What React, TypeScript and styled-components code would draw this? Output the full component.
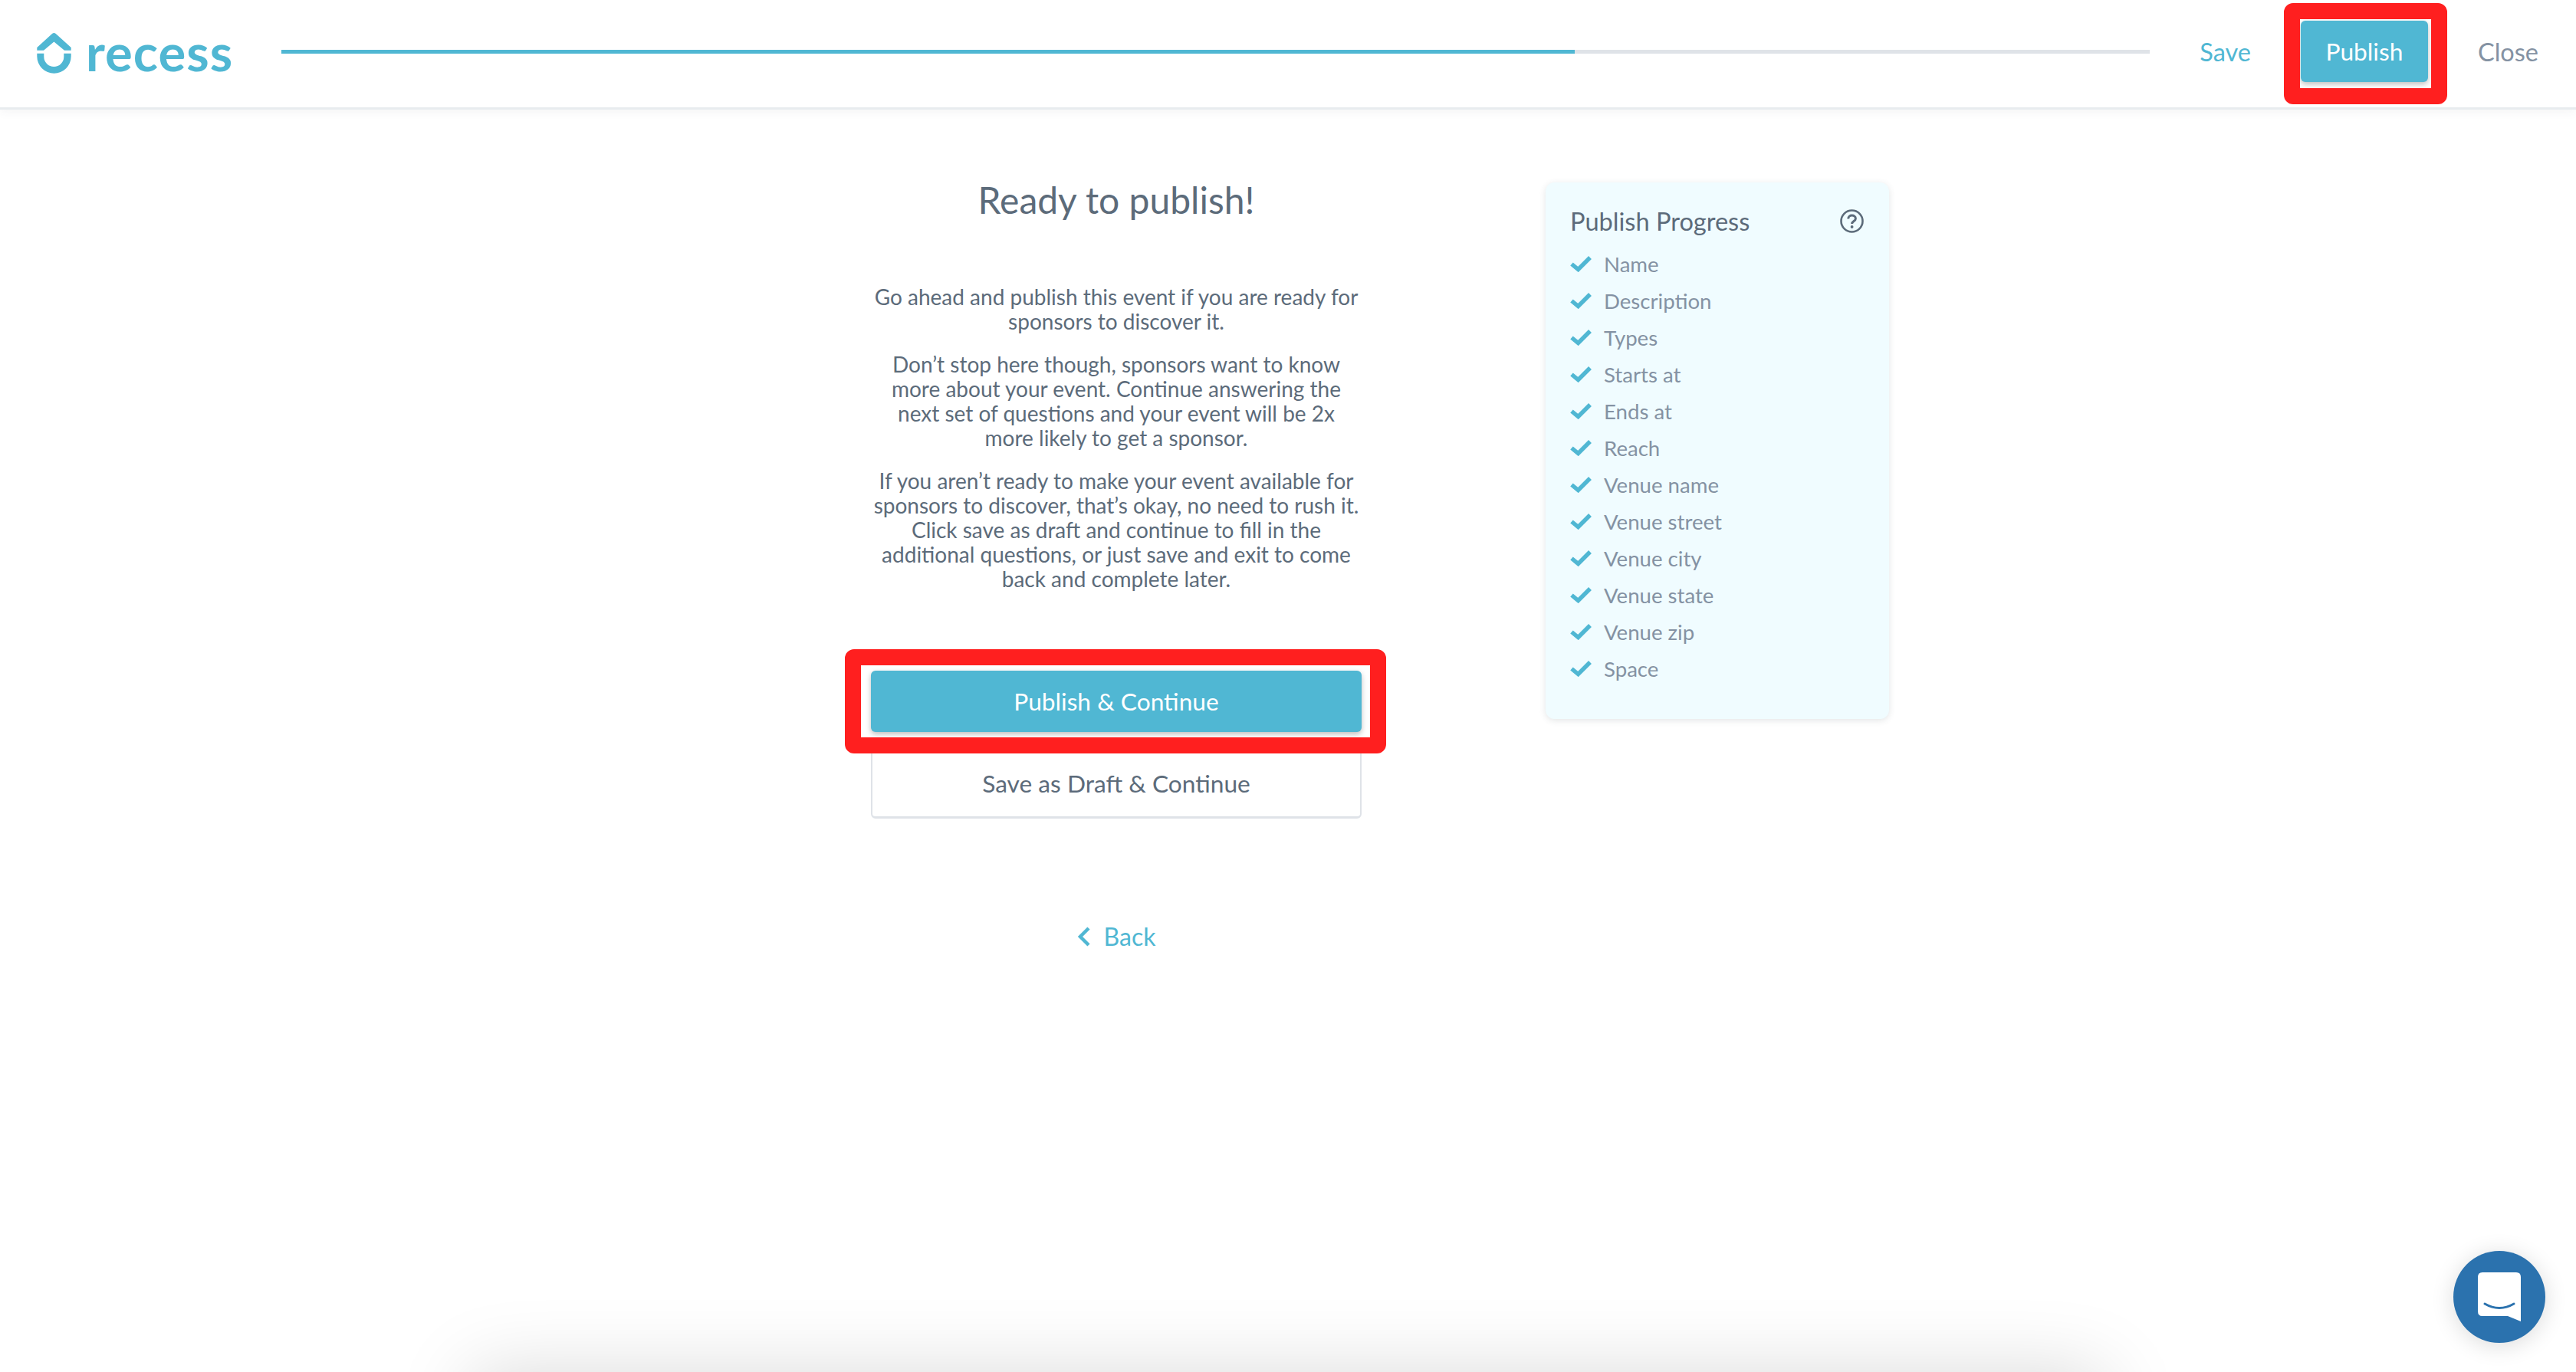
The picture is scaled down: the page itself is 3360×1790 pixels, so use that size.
import React from 'react';
import styled, { createGlobalStyle } from 'styled-components';

const BLUE = '#50b7d3';
const SLATE = '#5c6b7a';
const GREY = '#8492a3';
const RED = '#ff1f1f';

const GlobalStyle = createGlobalStyle`
  html, body {
    margin: 0;
    padding: 0;
    background: #fff;
  }
  body {
    font-family: Lato, "Liberation Sans", sans-serif;
    color: ${SLATE};
    overflow: hidden;
  }
`;

const Page = styled.div`
  position: relative;
  display: flex;
  flex-direction: column;
  height: 1790px;
  overflow: hidden;
`;

const Header = styled.header`
  flex: 0 0 140px;
  box-sizing: border-box;
  display: flex;
  align-items: center;
  gap: 65px;
  padding: 0 49px 6px 48px;
  background: #fff;
  box-shadow: 0 3px 0 #e8ecef, 0 6px 12px rgba(60, 70, 80, 0.06);
  z-index: 2;
`;

const Logo = styled.div`
  display: flex;
  align-items: center;
  gap: 19px;
  margin-top: 4px;
`;

const LogoWord = styled.span`
  font-size: 67px;
  line-height: 54px;
  font-weight: 700;
  letter-spacing: 1px;
  color: ${BLUE};
  margin: -5px -2px 0 0;
`;

const ProgressTrack = styled.div`
  flex: 1;
  height: 5px;
  background: #dfe3e8;
`;

const ProgressFill = styled.div`
  height: 100%;
  background: ${BLUE};
`;

const NavLink = styled.span<{ $muted?: boolean }>`
  font-size: 32.5px;
  color: ${p => (p.$muted ? GREY : BLUE)};
`;

const Button = styled.button<{ $outline?: boolean }>`
  display: block;
  border-radius: 6px;
  font-family: inherit;
  font-size: 31.7px;
  cursor: pointer;
  ${p =>
    p.$outline
      ? `
    background: #fff;
    color: ${SLATE};
    border: 2px solid #dfe3e8;
    border-bottom-width: 3px;
  `
      : `
    background: ${BLUE};
    color: #fff;
    border: 0;
    box-shadow: 0 3px 7px rgba(0, 0, 0, 0.25);
  `}
`;

const Callout = styled.div`
  position: relative;
  z-index: 3;
`;

/* the red annotation boxes drawn over the screenshot */
const Marker = styled.div<{ $t: number; $r: number; $b: number; $l: number }>`
  position: absolute;
  top: ${p => p.$t}px;
  right: ${p => p.$r}px;
  bottom: ${p => p.$b}px;
  left: ${p => p.$l}px;
  border: 21px solid ${RED};
  border-radius: 12px;
  pointer-events: none;
`;

const PublishButton = styled(Button)`
  width: 166px;
  height: 80px;
`;

const Main = styled.main`
  flex: 0 0 1650px;
  width: 2200px;
  box-sizing: border-box;
  margin: 0 auto;
  padding: 96px 0 0 556px;
  display: flex;
  align-items: flex-start;
  gap: 240px;
`;

const Column = styled.section`
  width: 640px;
  margin-top: 0;
  display: flex;
  flex-direction: column;
  text-align: center;
`;

const Title = styled.h1`
  margin: 0 0 85px;
  font-size: 48px;
  line-height: 50px;
  font-weight: 400;
  color: ${SLATE};
`;

const Copy = styled.p`
  margin: 0 0 24px;
  font-size: 28px;
  line-height: 32px;
`;

const Actions = styled.div`
  margin-top: 80px;
  display: flex;
  flex-direction: column;
  gap: 22px;
`;

const WideButton = styled(Button)`
  width: 640px;
  height: ${p => (p.$outline ? '91px' : '80px')};
`;

const BackLink = styled.div`
  margin-top: 136px;
  display: flex;
  justify-content: center;
  align-items: center;
  gap: 18px;
  font-size: 32px;
  line-height: 36px;
  color: ${BLUE};
`;

const Card = styled.aside`
  width: 448px;
  height: 700px;
  box-sizing: border-box;
  padding: 32px 33px 0 32px;
  margin-top: 2px;
  background: #f0fcff;
  border-radius: 12px;
  box-shadow: 0 2px 8px rgba(60, 70, 80, 0.14);
`;

const CardHead = styled.div`
  display: flex;
  align-items: center;
  justify-content: space-between;
  height: 36px;
  margin-bottom: 14px;
`;

const CardTitle = styled.h2`
  margin: 0;
  font-size: 32.6px;
  font-weight: 400;
  color: ${SLATE};
`;

const CheckList = styled.ul`
  margin: 0;
  padding: 0;
  list-style: none;
`;

const CheckItem = styled.li`
  height: 48px;
  display: flex;
  align-items: center;
  gap: 16px;
  font-size: 27.6px;
  color: ${GREY};
`;

const ChatBubble = styled.div`
  position: absolute;
  left: 3200px;
  top: 1632px;
  width: 120px;
  height: 120px;
  border-radius: 50%;
  background: #2b72ae;
  display: flex;
  align-items: center;
  justify-content: center;
  box-shadow: 0 4px 30px rgba(0, 0, 0, 0.14);
`;

const PageFooter = styled.div`
  flex: 0 0 200px;
  width: 2130px;
  margin: 0 auto;
  box-shadow: 0 0 100px rgba(0, 0, 0, 0.15);
`;

const LogoMark = () => (
  <svg width="45" height="54" viewBox="0 0 45 54" fill={BLUE}>
    <path d="M0.3 20 L20 2 Q22.4 0 24.8 2 L44.7 20 V23.7 H36 L22.4 12.5 L9 23.7 H0.3 Z" />
    <path d="M0.3 27.7 H9.3 V32 A13 13 0 0 0 35.3 32 V27.7 H44.7 V31.5 A22.2 22.2 0 0 1 0.3 31.5 Z" />
  </svg>
);

const Check = () => (
  <svg width="28" height="22" viewBox="0 0 28 22" fill="none" stroke={BLUE} strokeWidth="5.5">
    <path d="M2 11.5 L10.5 18.5 L26 3" />
  </svg>
);

const HelpIcon = () => (
  <svg width="31" height="31" viewBox="0 0 31 31" fill="none" stroke={SLATE}>
    <circle cx="15.5" cy="15.5" r="14" strokeWidth="2.6" />
    <path d="M10.8 12.4 C10.8 6.6 20.4 6.8 20.4 12.2 C20.4 15.4 15.6 15.6 15.6 19" strokeWidth="3" />
    <circle cx="15.6" cy="23" r="1.9" fill={SLATE} stroke="none" />
  </svg>
);

const ChevronLeft = () => (
  <svg width="17" height="26" viewBox="0 0 17 26" fill="none" stroke={BLUE} strokeWidth="4.5">
    <path d="M15 2 L4 13 L15 24" />
  </svg>
);

const ChatIcon = () => (
  <svg width="56" height="64" viewBox="0 0 56 64">
    <path
      d="M6 0 H50 Q56 0 56 6 V64 L39 57 H6 Q0 57 0 51 V6 Q0 0 6 0 Z"
      fill="#fff"
    />
    <path d="M9 41 Q28 52 47 41" fill="none" stroke="#2b72ae" strokeWidth="3" strokeLinecap="round" />
  </svg>
);

const progressItems = [
  'Name',
  'Description',
  'Types',
  'Starts at',
  'Ends at',
  'Reach',
  'Venue name',
  'Venue street',
  'Venue city',
  'Venue state',
  'Venue zip',
  'Space',
];

export default function App() {
  return (
    <Page>
      <GlobalStyle />
      <Header>
        <Logo>
          <LogoMark />
          <LogoWord>recess</LogoWord>
        </Logo>
        <ProgressTrack>
          <ProgressFill style={{ width: `${((2053 - 366) / (2804 - 366)) * 100}%` }} />
        </ProgressTrack>
        <NavLink>Save</NavLink>
        <Callout>
          <PublishButton>Publish</PublishButton>
          <Marker $t={-23} $r={-25} $b={-29} $l={-22} />
        </Callout>
        <NavLink $muted>Close</NavLink>
      </Header>
      <Main>
        <Column>
          <Title>Ready to publish!</Title>
          <Copy>
            Go ahead and publish this event if you are ready for
            <br />
            sponsors to discover it.
          </Copy>
          <Copy>
            Don’t stop here though, sponsors want to know
            <br />
            more about your event. Continue answering the
            <br />
            next set of questions and your event will be 2x
            <br />
            more likely to get a sponsor.
          </Copy>
          <Copy>
            If you aren’t ready to make your event available for
            <br />
            sponsors to discover, that’s okay, no need to rush it.
            <br />
            Click save as draft and continue to fill in the
            <br />
            additional questions, or just save and exit to come
            <br />
            back and complete later.
          </Copy>
          <Actions>
            <Callout>
              <WideButton>Publish &amp; Continue</WideButton>
              <Marker $t={-28} $r={-32} $b={-28} $l={-34} />
            </Callout>
            <WideButton $outline>Save as Draft &amp; Continue</WideButton>
          </Actions>
          <BackLink>
            <ChevronLeft />
            Back
          </BackLink>
        </Column>
        <Card>
          <CardHead>
            <CardTitle>Publish Progress</CardTitle>
            <HelpIcon />
          </CardHead>
          <CheckList>
            {progressItems.map(item => (
              <CheckItem key={item}>
                <Check />
                {item}
              </CheckItem>
            ))}
          </CheckList>
        </Card>
      </Main>
      <PageFooter />
      <ChatBubble>
        <ChatIcon />
      </ChatBubble>
    </Page>
  );
}
